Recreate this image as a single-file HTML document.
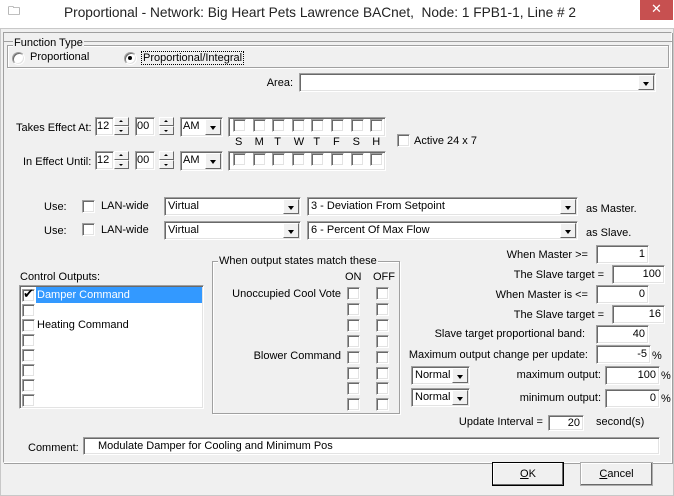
<!DOCTYPE html>
<html><head><meta charset="utf-8"><style>
*{box-sizing:border-box;margin:0;padding:0}
body{width:674px;height:496px;background:#fff;font-family:"Liberation Sans",sans-serif;font-size:11px;color:#000;position:relative;overflow:hidden}
.a{position:absolute;white-space:nowrap;line-height:13px}
.r{position:absolute;white-space:nowrap;line-height:13px;text-align:right}
.f{position:absolute;background:#fff;border:1px solid;border-color:#a0a0a0 #fff #fff #a0a0a0;box-shadow:inset 1px 1px 0 #696969,inset -1px -1px 0 #e3e3e3;line-height:17px;padding:0 3px}
.cb{position:absolute;width:13px;height:13px;background:#fff;border:1px solid;border-color:#a0a0a0 #fff #fff #a0a0a0;box-shadow:inset 1px 1px 0 #696969,inset -1px -1px 0 #e3e3e3}
.dd{position:absolute;right:1px;top:1px;bottom:1px;width:16px;background:#f0f0f0;border:1px solid;border-color:#fff #696969 #696969 #fff}
.dd:after{content:"";position:absolute;left:4px;top:6px;border-left:3.5px solid transparent;border-right:3.5px solid transparent;border-top:4px solid #000}
.sp{position:absolute;width:15px;height:19px}
.sp div{height:9px;background:#f0f0f0;border:1px solid;border-color:#fff #696969 #696969 #fff;position:relative}
.sp div:first-child:after{content:"";position:absolute;left:4px;top:2px;border-left:2px solid transparent;border-right:2px solid transparent;border-bottom:2px solid #000}
.sp div:last-child:after{content:"";position:absolute;left:4px;top:3px;border-left:2px solid transparent;border-right:2px solid transparent;border-top:2px solid #000}
.grp{position:absolute;border:1px solid #a0a0a0;box-shadow:inset 1px 1px 0 #fff,1px 1px 0 #fff}
.btn{position:absolute;background:#f0f0f0;border:1px solid #000;box-shadow:inset -1px -1px 0 #696969,inset 1px 1px 0 #fff;text-align:center;line-height:22px}
</style></head><body>
<div class="a" style="left:8px;top:5px;font-size:12px">&#x1F5C0;</div>
<div class="a" style="left:64px;top:4px;font-size:13.7px;line-height:18px;color:#222">Proportional - Network: Big Heart Pets Lawrence BACnet,&nbsp; Node: 1 FPB1-1, Line # 2</div>
<div style="position:absolute;left:640px;top:0;width:33px;height:20px;background:#c75050;color:#fff;text-align:center;font-size:13px;line-height:18px">✕</div>
<div style="position:absolute;left:0;top:28px;width:674px;height:468px;background:#f0f0f0;border:1px solid #c8c8c8"></div>
<div style="position:absolute;left:3px;top:32px;width:669px;height:431px;border:1px solid;border-color:#a0a0a0 #fff #fff #a0a0a0;box-shadow:1px 1px 0 #a0a0a0"></div>
<div style="position:absolute;left:3px;top:41px;width:669px;height:0;border-top:1px solid #a0a0a0"></div>
<div class="grp" style="left:7px;top:45px;width:662px;height:23px"></div>
<div class="a" style="left:13px;top:37px;background:#f0f0f0;padding:0 1px">Function Type</div>
<div class="cb" style="left:12px;top:52px;border-radius:50%"></div>
<div class="a" style="left:30px;top:51px">Proportional</div>
<div class="cb" style="left:124px;top:52px;border-radius:50%"></div><div style="position:absolute;left:128px;top:56px;width:4px;height:4px;background:#000;border-radius:50%"></div>
<div class="a" style="left:141px;top:51px;border:1px dotted #000;padding:0 1px;line-height:12px">Proportional/Integral</div>
<div class="r" style="left:230px;width:63px;top:77px">Area:</div>
<div class="f" style="left:299px;top:73px;width:357px;height:19px"><div class="dd"></div></div>

<div class="a" style="left:16px;top:122px">Takes Effect At:</div>
<div class="f" style="left:95px;top:117px;width:19px;height:19px;padding:0 1px">12</div><div class="sp" style="left:114px;top:117px"><div></div><div></div></div>
<div class="f" style="left:135px;top:117px;width:20px;height:19px;padding:0 1px">00</div><div class="sp" style="left:159px;top:117px"><div></div><div></div></div>
<div class="f" style="left:180px;top:117px;width:43px;height:20px;padding:0 2px">AM<div class="dd"></div></div>
<div class="f" style="left:228px;top:117px;width:158px;height:20px;padding:0"></div>
<div class="a" style="left:23px;top:156px">In Effect Until:</div>
<div class="f" style="left:95px;top:151px;width:19px;height:19px;padding:0 1px">12</div><div class="sp" style="left:114px;top:151px"><div></div><div></div></div>
<div class="f" style="left:135px;top:151px;width:20px;height:19px;padding:0 1px">00</div><div class="sp" style="left:159px;top:151px"><div></div><div></div></div>
<div class="f" style="left:180px;top:151px;width:43px;height:20px;padding:0 2px">AM<div class="dd"></div></div>
<div class="f" style="left:228px;top:151px;width:158px;height:20px;padding:0"></div>
<div id="days"></div>
<div class="cb" style="left:397px;top:134px"></div><div class="a" style="left:414px;top:135px">Active 24 x 7</div>

<div class="a" style="left:44px;top:201px">Use:</div><div class="cb" style="left:82px;top:200px"></div><div class="a" style="left:101px;top:200px">LAN-wide</div>
<div class="f" style="left:164px;top:197px;width:137px;height:19px">Virtual<div class="dd"></div></div>
<div class="f" style="left:307px;top:197px;width:271px;height:19px">3 - Deviation From Setpoint<div class="dd"></div></div>
<div class="a" style="left:586px;top:203px">as Master.</div>
<div class="a" style="left:44px;top:225px">Use:</div><div class="cb" style="left:82px;top:223px"></div><div class="a" style="left:101px;top:224px">LAN-wide</div>
<div class="f" style="left:164px;top:221px;width:137px;height:19px">Virtual<div class="dd"></div></div>
<div class="f" style="left:307px;top:221px;width:271px;height:19px">6 - Percent Of Max Flow<div class="dd"></div></div>
<div class="a" style="left:586px;top:227px">as Slave.</div>

<div class="a" style="left:20px;top:271px">Control Outputs:</div>
<div class="f" style="left:19px;top:285px;width:185px;height:124px;padding:0"></div>
<div style="position:absolute;left:36px;top:287px;width:166px;height:16px;background:#3399ff"></div>
<div class="a" style="left:37px;top:289px;color:#fff">Damper Command</div>
<div class="a" style="left:37px;top:319px">Heating Command</div>
<div id="lst"></div>
<div class="grp" style="left:212px;top:261px;width:188px;height:153px"></div>
<div class="a" style="left:218px;top:255px;background:#f0f0f0;padding:0 1px">When output states match these</div>
<div class="a" style="left:345px;top:271px">ON</div><div class="a" style="left:373px;top:271px">OFF</div>
<div class="r" style="left:200px;width:141px;top:288px">Unoccupied Cool Vote</div>
<div class="r" style="left:200px;width:141px;top:350px">Blower Command</div>
<div id="grid"></div>

<div class="r" style="left:440px;width:148px;top:249px">When Master &gt;=</div><div class="f" style="left:596px;top:245px;width:53px;height:19px;text-align:right">1</div>
<div class="r" style="left:440px;width:164px;top:269px">The Slave target =</div><div class="f" style="left:612px;top:265px;width:53px;height:19px;text-align:right">100</div>
<div class="r" style="left:440px;width:148px;top:289px">When Master is &lt;=</div><div class="f" style="left:596px;top:285px;width:53px;height:19px;text-align:right">0</div>
<div class="r" style="left:440px;width:164px;top:309px">The Slave target =</div><div class="f" style="left:612px;top:305px;width:53px;height:19px;text-align:right">16</div>
<div class="r" style="left:400px;width:185px;top:328px">Slave target proportional band:</div><div class="f" style="left:596px;top:325px;width:53px;height:19px;text-align:right">40</div>
<div class="r" style="left:400px;width:188px;top:349px">Maximum output change per update:</div><div class="f" style="left:596px;top:345px;width:55px;height:19px;text-align:right">-5</div><div class="a" style="left:652px;top:350px">%</div>
<div class="f" style="left:411px;top:366px;width:59px;height:19px">Normal<div class="dd"></div></div>
<div class="f" style="left:411px;top:388px;width:59px;height:19px">Normal<div class="dd"></div></div>
<div class="r" style="left:470px;width:131px;top:369px">maximum output:</div><div class="f" style="left:605px;top:366px;width:55px;height:19px;text-align:right">100</div><div class="a" style="left:661px;top:370px">%</div>
<div class="r" style="left:470px;width:131px;top:392px">minimum output:</div><div class="f" style="left:605px;top:389px;width:55px;height:19px;text-align:right">0</div><div class="a" style="left:661px;top:393px">%</div>
<div class="r" style="left:420px;width:123px;top:416px">Update Interval =</div><div class="f" style="left:548px;top:415px;width:36px;height:16px;line-height:14px;text-align:right">20</div><div class="a" style="left:596px;top:416px">second(s)</div>

<div class="a" style="left:28px;top:442px">Comment:</div>
<div class="f" style="left:83px;top:437px;width:577px;height:18px;padding:0 14px;line-height:16px">Modulate Damper for Cooling and Minimum Pos</div>
<div class="btn" style="left:492px;top:462px;width:72px;height:24px"><u>O</u>K</div>
<div class="btn" style="left:580px;top:462px;width:73px;height:24px;border-color:#adadad"><u>C</u>ancel</div>
<script>
var h='';var L=['S','M','T','W','T','F','S','H'];
for(var i=0;i<8;i++){var x=230+i*19.6;h+='<div class="cb" style="left:'+(x+3)+'px;top:119px"></div><div class="cb" style="left:'+(x+3)+'px;top:153px"></div><div class="a" style="left:'+(x+5)+'px;top:136px">'+L[i]+'</div>';}
document.getElementById('days').innerHTML=h;h='';
for(i=0;i<8;i++){var y=289+i*15;h+='<div class="cb" style="left:22px;top:'+y+'px"></div>';}
h+='<div class="a" style="left:23px;top:287px;font-size:13px">✔</div>';
document.getElementById('lst').innerHTML=h;h='';
for(i=0;i<8;i++){var y=287+i*15.9;h+='<div class="cb" style="left:347px;top:'+y+'px"></div><div class="cb" style="left:376px;top:'+y+'px"></div>';}
document.getElementById('grid').innerHTML=h;
</script>
</body></html>
